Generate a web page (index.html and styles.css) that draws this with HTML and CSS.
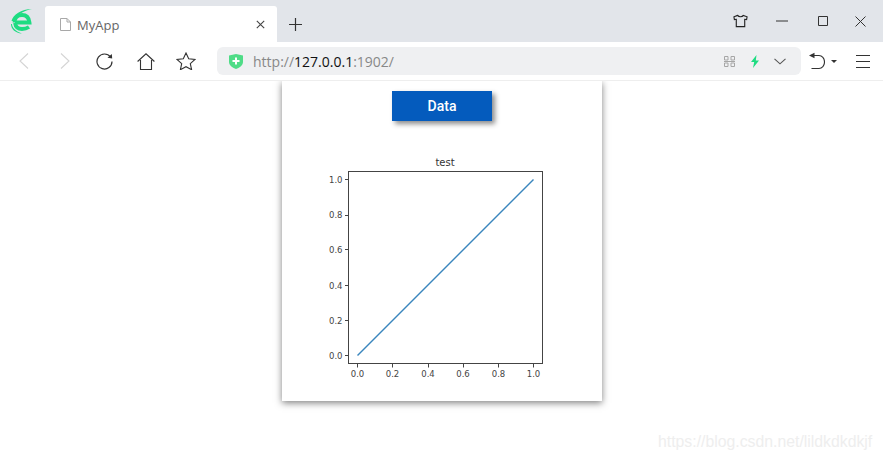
FILE: index.html
```html
<!DOCTYPE html>
<html lang="en">
<head>
<meta charset="utf-8">
<title>MyApp</title>
<link rel="stylesheet" href="styles.css">
</head>
<body>
<div class="tabstrip">
  <svg class="logo" width="23" height="27" viewBox="0 0 23 27"><path d="M4.500 15.500C4.500 11 7.500 8 12 8s7 3 7.500 7.500H5M5 16c.5 3.500 3 6 7 6 3 0 5-.7 7-2" fill="none" stroke="#1edc82" stroke-width="3.800"/><path d="M1.500 14C3 8 11 2 22 2 16 3 8 6 4 14ZM2 17c0 3 3 7 10 9.500C5 26 1 22 1 17Z" fill="#1edc82"/></svg>
  <div class="tab">
    <svg class="docicon" width="11" height="13" viewBox="0 0 11 13"><path d="M.5.500h6.500l3.500 3.500v8.500H.5ZM7 .5V4h3.500" fill="none" stroke="#a8a8a8"/></svg>
    <span class="tabtitle">MyApp</span>
    <svg class="tabclose" width="9" height="9" viewBox="0 0 9 9"><path d="M.8.800l7.400 7.400M8.200.800L.8 8.200" stroke="#444" stroke-width="1.100"/></svg>
  </div>
  <svg class="newtab" width="13" height="13" viewBox="0 0 13 13"><path d="M6.500 0v13M0 6.500h13" stroke="#333" stroke-width="1.200"/></svg>
  <div class="winctl">
    <svg width="15" height="14" viewBox="0 0 16 14"><path d="M5 1 1 2.500 1.500 5.500 3.500 5.200V13h9V5.200l2 .3.500-3L11 1C10 3 6 3 5 1Z" fill="none" stroke="#222" stroke-width="1.200"/></svg>
    <svg width="12" height="2" viewBox="0 0 12 2"><path d="M0 1h12" stroke="#333" stroke-width="1"/></svg>
    <svg width="10" height="10" viewBox="0 0 10 10"><path d="M.5.500h9v9h-9Z" fill="none" stroke="#333"/></svg>
    <svg width="11" height="11" viewBox="0 0 11 11"><path d="M.5.500l10 10M10.500.500l-10 10" stroke="#333"/></svg>
  </div>
</div>
<div class="toolbar">
  <svg class="back" width="10" height="16" viewBox="0 0 10 16"><path d="M9 .5 1 8l8 7.500" fill="none" stroke="#d4d4d4" stroke-width="1.100"/></svg>
  <svg class="forward" width="10" height="16" viewBox="0 0 10 16"><path d="M1 .5 9 8l-8 7.500" fill="none" stroke="#d4d4d4" stroke-width="1.100"/></svg>
  <svg class="reload" width="17" height="17" viewBox="0 0 17 17"><path d="M14.500 4A7.500 7.500 0 1 0 16 8.500" fill="none" stroke="#333" stroke-width="1.200"/><path d="M11.500 4.800 16.200 5.500 15.800 1Z" fill="#333"/></svg>
  <svg class="home" width="18" height="17" viewBox="0 0 18 17"><path d="M.6 8.500 9 .8l8.400 7.700M3.500 7v9.500h11V7" fill="none" stroke="#333" stroke-width="1.100"/></svg>
  <svg class="star" width="20" height="18" viewBox="0 0 20 18"><path d="M10 1l2.700 5.800 6.300.7-4.700 4.200 1.300 6L10 14.700 4.400 17.700l1.300-6L1 7.500l6.300-.7Z" fill="none" stroke="#333" stroke-width="1.100"/></svg>
  <div class="address">
    <svg class="shield" width="14" height="15" viewBox="0 0 14 15"><path d="M0 1.500 7 0l7 1.500V8c0 3.500-4 6-7 7-3-1-7-3.500-7-7Z" fill="#4fdc87"/><path d="M7 3.500v7M3.500 7h7" stroke="#fff" stroke-width="2"/></svg>
    <span class="url"><span class="dim">http://</span>127.0.0.1<span class="dim">:1902/</span></span>
    <svg class="qr" width="11" height="11" viewBox="0 0 11 11"><path d="M.5.500h3.500v3.500H.5ZM7 .5h3.500v3.500H7ZM.5 7h3.500v3.500H.5ZM7 7h3.500v3.500H7ZM0 5.500h11" fill="none" stroke="#a6a6a6"/></svg>
    <svg class="bolt" width="10" height="13" viewBox="0 0 10 13"><path d="M6.500 0 1 7h3.200L3 13l6-7.500H5.800Z" fill="#1edc82"/></svg>
    <svg class="chev" width="12" height="7" viewBox="0 0 12 7"><path d="M.5.800 6 5.800l5.500-5" fill="none" stroke="#555" stroke-width="1.100"/></svg>
  </div>
  <svg class="undo" width="16" height="18" viewBox="0 0 16 18"><path d="M5 3.500h5a5.500 6.500 0 0 1 0 13H2.500" fill="none" stroke="#333" stroke-width="1.100"/><path d="M0 3.500 5.500.8v5.400Z" fill="#333"/></svg>
  <span class="caret"></span>
  <svg class="menu" width="14" height="13" viewBox="0 0 14 13"><path d="M0 .5h14M0 6.500h14M0 12.500h14" stroke="#333" stroke-width="1"/></svg>
</div>
<main class="page">
  <section class="card">
    <button class="data" type="button">Data</button>
    <svg class="chart" width="320" height="280" viewBox="0 0 320 280">
      <text class="title" x="163" y="45">test</text>
      <rect class="axes" x="66.500" y="50.500" width="194" height="192"/>
      <path class="tick" d="M63 234.500h3.500M63 199.500h3.500M63 164.500h3.500M63 128.500h3.500M63 94.500h3.500M63 58.500h3.500M75.500 243v3.500M110.500 243v3.500M146.500 243v3.500M181.500 243v3.500M216.500 243v3.500M251.500 243v3.500"/>
      <path class="line" d="M75.500 234.500 251.500 58.500"/>
      <g class="ylab">
        <text x="60.500" y="237.500">0.0</text><text x="60.500" y="202.500">0.2</text><text x="60.500" y="167.500">0.4</text><text x="60.500" y="131.500">0.6</text><text x="60.500" y="97">0.8</text><text x="60.500" y="61.500">1.0</text>
      </g>
      <g class="xlab">
        <text x="75.500" y="256">0.0</text><text x="110.500" y="256">0.2</text><text x="146" y="256">0.4</text><text x="181" y="256">0.6</text><text x="216.500" y="256">0.8</text><text x="251.500" y="256">1.0</text>
      </g>
    </svg>
  </section>
</main>
<div class="watermark">https://blog.csdn.net/lildkdkdkjf</div>
</body>
</html>
```

FILE: styles.css
```css
* { box-sizing: border-box; }
html, body { margin: 0; height: 100%; }
body { position: relative; width: 883px; height: 461px; overflow: hidden; background: #fff; font-family: "Open Sans", "Liberation Sans", sans-serif; }
svg { display: block; flex: none; }

.tabstrip { display: flex; align-items: flex-start; height: 42px; background: #e2e5ea; }
.logo { margin: 7px 0 0 10px; }
.tab { display: flex; align-items: center; width: 232px; height: 36px; margin: 6px 0 0 12px; padding: 1px 0 0 15px; background: #fff; border-radius: 3px 3px 0 0; }
.tabtitle { margin-left: 6px; font-size: 13px; color: #666; }
.tabclose { margin-left: auto; margin-right: 12px; }
.newtab { margin: 18px 0 0 12px; }
.winctl { display: flex; align-items: center; margin: 14px 0 0 auto; padding-right: 17px; height: 14px; }
.winctl svg:nth-child(2) { margin-left: 28px; }
.winctl svg:nth-child(3) { margin-left: 30px; }
.winctl svg:nth-child(4) { margin-left: 27px; }

.toolbar { display: flex; align-items: center; height: 39px; border-bottom: 1px solid #eee; background: #fff; padding-right: 13px; }
.back { margin-left: 19px; }
.forward { margin-left: 31px; }
.reload { margin-left: 26px; }
.home { margin-left: 24px; }
.star { margin-left: 21px; }
.address { display: flex; align-items: center; width: 584px; height: 28px; margin-left: 21px; padding: 0 15px 0 12px; background: #eff0f2; border-radius: 6px; }
.url { margin-left: 10px; font-size: 14px; color: #111; }
.dim { color: #888; }
.qr { margin-left: auto; margin-right: -1px; }
.bolt { margin-left: 16px; }
.chev { margin-left: 14px; }
.undo { margin-left: 8px; }
.caret { margin-left: 6px; border: 3px solid transparent; border-top: 3px solid #333; border-bottom: 0; }
.menu { margin-left: auto; }

.page { display: flex; justify-content: center; margin-left: 1px; }
.card { display: flex; flex-direction: column; align-items: center; width: 320px; height: 320px; padding-top: 10px; background: #fff; box-shadow: 0 2px 7px rgba(0,0,0,.5); clip-path: inset(0 -12px -12px -12px); }
.data { width: 100px; height: 30px; padding: 0; border: 0; background: #045bbd; color: #fff; font: 500 14px Roboto, "Liberation Sans", sans-serif; box-shadow: 3px 3px 5px rgba(0,0,0,.45); }
.chart { margin-top: 0; }

.title { font: 10px "DejaVu Sans", sans-serif; fill: #333; text-anchor: middle; }
.axes { fill: #fff; stroke: #444; stroke-width: 1; }
.tick { stroke: #444; stroke-width: 1; fill: none; }
.line { stroke: #3a86bd; stroke-width: 1.400; fill: none; }
.ylab text, .xlab text { font: 8.500px "DejaVu Sans", sans-serif; fill: #444; }
.ylab text { text-anchor: end; }
.xlab text { text-anchor: middle; }

.watermark { position: absolute; left: 658px; top: 433px; font: 15.800px "Liberation Sans", Arial, sans-serif; color: #eeeeee; white-space: nowrap; }
```
